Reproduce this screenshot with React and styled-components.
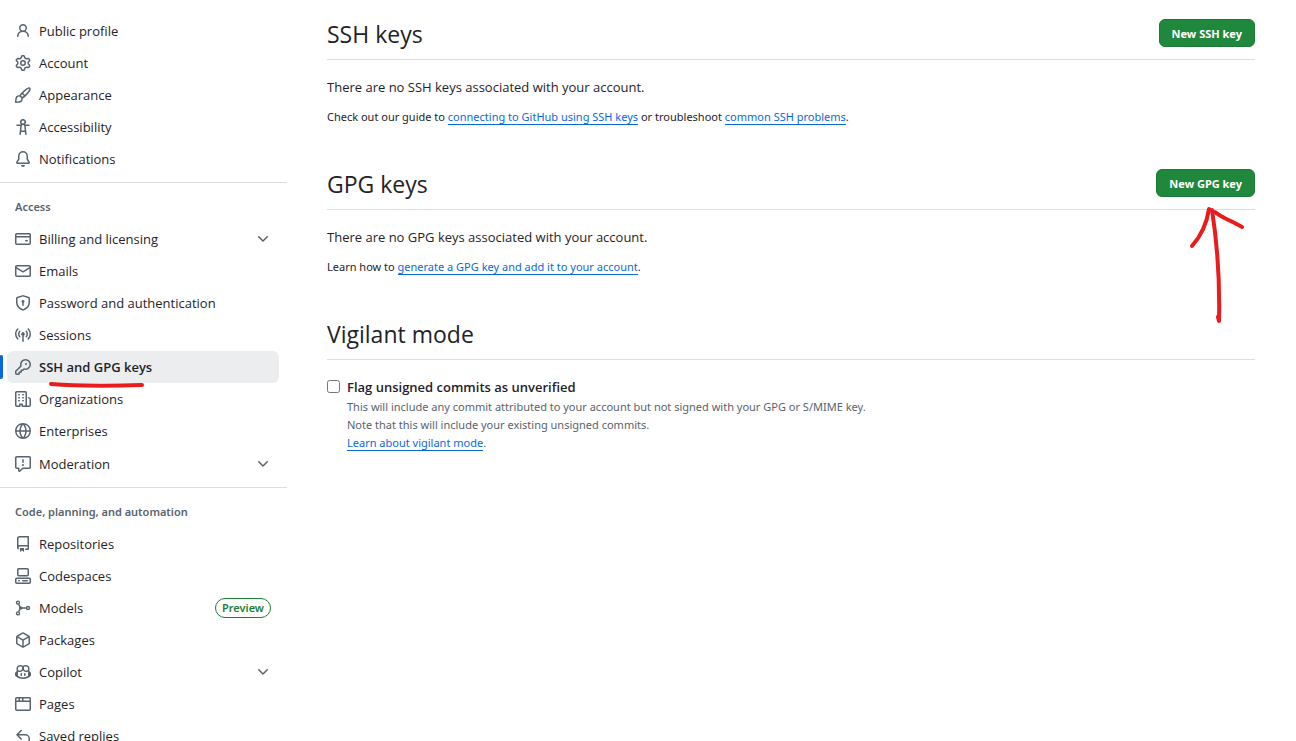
// src/App.jsx
import React from 'react';
import styled, { createGlobalStyle } from 'styled-components';

const smallFont = "'Noto Sans', 'Open Sans', sans-serif";

const GlobalStyle = createGlobalStyle`
  * {
    box-sizing: border-box;
  }

  body {
    margin: 0;
    color: #1f2328;
    background: #fff;
    font-family: 'Open Sans', 'Noto Sans', sans-serif;
    font-size: 13px;
    line-height: 20px;
  }
`;

const Page = styled.div`
  display: flex;
  height: 100vh;
  overflow: hidden;
`;

const Sidebar = styled.nav`
  flex: 0 0 287px;
  padding-top: 15px;
`;

const NavGroup = styled.section`
  & + & {
    margin-top: 7px;
    border-top: 1px solid #d9dee3;
  }
`;

const GroupTitle = styled.h2`
  margin: 0;
  padding: 14px 15px 7px;
  color: #59636e;
  font-family: ${smallFont};
  font-size: 11px;
  font-weight: 600;
  line-height: 19px;
`;

const NavList = styled.ul`
  margin: 0;
  padding: 0 8px 0 7px;
  list-style: none;
`;

const NavItem = styled.li`
  position: relative;
  padding-bottom: ${({ $tall }) => ($tall ? '1px' : '0')};
`;

const NavLink = styled.a`
  display: flex;
  align-items: center;
  gap: 8px;
  min-height: 32px;
  padding: 0 8px;
  border-radius: 6px;
  color: #1f2328;
  background: ${({ $active }) => ($active ? '#ebedef' : 'transparent')};
  font-weight: ${({ $active }) => ($active ? 600 : 400)};
  text-decoration: none;

  &:hover {
    background: #ebedef;
  }
`;

const ActiveBar = styled.span`
  position: absolute;
  top: 4px;
  left: -8px;
  width: 4px;
  height: 24px;
  border-radius: 6px;
  background: #0969da;
`;

const NavLabel = styled.span`
  flex: 1;
`;

const Svg = styled.svg`
  flex: none;
  width: 16px;
  height: 16px;
  fill: #59636e;
`;

const Badge = styled.span`
  padding: 0 6px;
  border: 1px solid #1a7f37;
  border-radius: 20px;
  color: #1a7f37;
  font-family: ${smallFont};
  font-size: 11px;
  font-weight: 600;
  line-height: 18px;
`;

const Main = styled.main`
  flex: 1;
  min-width: 0;
  padding: 19px 41px 0 40px;
`;

const Section = styled.section`
  min-height: 150px;
`;

const SectionHeader = styled.header`
  display: flex;
  align-items: flex-start;
  justify-content: space-between;
  min-height: 41px;
  border-bottom: 1px solid #dadfe4;
`;

const Title = styled.h1`
  margin: 0;
  font-size: 23px;
  font-weight: 400;
  line-height: 30px;
`;

const ButtonWrap = styled.div`
  position: relative;
`;

const GreenButton = styled.button`
  display: block;
  height: 28px;
  padding: 0 12px;
  border: 1px solid #1c7a36;
  border-radius: 6px;
  color: #fff;
  background: #1f883d;
  font-family: ${smallFont};
  font-size: 11px;
  font-weight: 700;
  cursor: pointer;

  &:hover {
    background: #1c8139;
  }
`;

const Text = styled.p`
  margin: 17px 0 0;
`;

const SmallText = styled.p`
  margin: 11px 0 0;
  font-family: ${smallFont};
  font-size: 11px;
  line-height: 18px;
`;

const Link = styled.a`
  border-bottom: 1px solid #0969da;
  color: #0969da;
  text-decoration: none;
`;

const CheckRow = styled.div`
  display: flex;
  gap: 7px;
  margin-top: 17px;
`;

const Checkbox = styled.input`
  flex: none;
  width: 13px;
  height: 13px;
  margin: 3px 0 0;
`;

const CheckLabel = styled.label`
  display: block;
  margin-bottom: 1px;
  font-weight: 600;
`;

const Note = styled.p`
  margin: 0;
  color: #59636e;
  font-family: ${smallFont};
  font-size: 11px;
  line-height: 18px;
`;

// hand drawn marks
const Mark = styled.svg`
  position: absolute;
  z-index: 1;
  fill: none;
  stroke: #e81c1c;
  stroke-width: 4;
  stroke-linecap: round;
  stroke-linejoin: round;
  pointer-events: none;
`;

const UnderlineMark = styled(Mark)`
  top: 28px;
  left: 39px;
  width: 102px;
  height: 10px;
`;

const ArrowMark = styled(Mark)`
  top: 31px;
  right: 5px;
  width: 70px;
  height: 130px;
`;

const icons = {
  person: 'M10.561 8.073a6.005 6.005 0 0 1 3.432 5.142.75.75 0 1 1-1.498.07 4.5 4.5 0 0 0-8.99 0 .75.75 0 0 1-1.498-.07 6.004 6.004 0 0 1 3.431-5.142 3.999 3.999 0 1 1 5.123 0ZM10.5 5a2.5 2.5 0 1 0-5 0 2.5 2.5 0 0 0 5 0Z',
  gear: 'M8 0a8.2 8.2 0 0 1 .701.031C9.444.095 9.99.645 10.16 1.29l.288 1.107c.018.066.079.158.212.224.231.114.454.243.668.386.123.082.233.09.299.071l1.103-.303c.644-.176 1.392.021 1.82.63.27.385.506.792.704 1.218.315.675.111 1.422-.364 1.891l-.814.806c-.049.048-.098.147-.088.294.016.257.016.515 0 .772-.01.147.038.246.088.294l.814.806c.475.469.679 1.216.364 1.891a7.977 7.977 0 0 1-.704 1.217c-.428.61-1.176.807-1.82.63l-1.102-.302c-.067-.019-.177-.011-.3.071a5.909 5.909 0 0 1-.668.386c-.133.066-.194.158-.211.224l-.29 1.106c-.168.646-.715 1.196-1.458 1.26a8.006 8.006 0 0 1-1.402 0c-.743-.064-1.289-.614-1.458-1.26l-.289-1.106c-.018-.066-.079-.158-.212-.224a5.738 5.738 0 0 1-.668-.386c-.123-.082-.233-.09-.299-.071l-1.103.303c-.644.176-1.392-.021-1.82-.63a8.12 8.12 0 0 1-.704-1.218c-.315-.675-.111-1.422.363-1.891l.815-.806c.05-.048.098-.147.088-.294a6.214 6.214 0 0 1 0-.772c.01-.147-.038-.246-.088-.294l-.815-.806C.635 6.045.431 5.298.746 4.623a7.92 7.92 0 0 1 .704-1.217c.428-.61 1.176-.807 1.82-.63l1.102.302c.067.019.177.011.3-.071.214-.143.437-.272.668-.386.133-.066.194-.158.211-.224l.29-1.106C6.009.645 6.556.095 7.299.03 7.53.01 7.764 0 8 0Zm-.571 1.525c-.036.003-.108.036-.137.146l-.289 1.105c-.147.561-.549.967-.998 1.189-.173.086-.34.183-.5.29-.417.278-.97.423-1.529.27l-1.103-.303c-.109-.03-.175.016-.195.045-.22.312-.412.644-.573.99-.014.031-.021.11.059.19l.815.806c.411.406.562.957.53 1.456a4.709 4.709 0 0 0 0 .582c.032.499-.119 1.05-.53 1.456l-.815.806c-.081.08-.073.159-.059.19.162.346.353.677.573.989.02.03.085.076.195.046l1.102-.303c.56-.153 1.113-.008 1.53.27.161.107.328.204.501.29.447.222.85.629.997 1.189l.289 1.105c.029.109.101.143.137.146a6.6 6.6 0 0 0 1.142 0c.036-.003.108-.036.137-.146l.289-1.105c.147-.561.549-.967.998-1.189.173-.086.34-.183.5-.29.417-.278.97-.423 1.529-.27l1.103.303c.109.029.175-.016.195-.045.22-.313.411-.644.573-.99.014-.031.021-.11-.059-.19l-.815-.806c-.411-.406-.562-.957-.53-1.456a4.709 4.709 0 0 0 0-.582c-.032-.499.119-1.05.53-1.456l.815-.806c.081-.08.073-.159.059-.19a6.464 6.464 0 0 0-.573-.989c-.02-.03-.085-.076-.195-.046l-1.102.303c-.56.153-1.113.008-1.53-.27a4.44 4.44 0 0 0-.501-.29c-.447-.222-.85-.629-.997-1.189l-.289-1.105c-.029-.11-.101-.143-.137-.146a6.6 6.6 0 0 0-1.142 0ZM11 8a3 3 0 1 1-6 0 3 3 0 0 1 6 0ZM9.5 8a1.5 1.5 0 1 0-3.001.001A1.5 1.5 0 0 0 9.5 8Z',
  paintbrush: 'M11.134 1.535c.7-.509 1.416-.942 2.076-1.155.649-.21 1.463-.267 2.069.34.603.601.568 1.411.368 2.07-.202.668-.624 1.39-1.125 2.096-1.011 1.424-2.496 2.987-3.775 4.249-1.098 1.084-2.132 1.839-3.04 2.3a3.744 3.744 0 0 1-1.055 3.217c-.431.431-1.065.691-1.657.861-.614.177-1.294.287-1.914.357A21.151 21.151 0 0 1 .797 16H.743l.007-.75H.749L.742 16a.75.75 0 0 1-.743-.742l.743-.008-.742.007v-.054a21.25 21.25 0 0 1 .13-2.284c.067-.647.187-1.287.358-1.914.17-.591.43-1.226.86-1.657a3.746 3.746 0 0 1 3.227-1.054c.466-.893 1.225-1.907 2.314-2.982 1.271-1.255 2.833-2.75 4.246-3.777ZM1.62 13.089c-.051.464-.086.929-.104 1.395.466-.018.932-.053 1.396-.104a10.511 10.511 0 0 0 1.668-.309c.526-.151.856-.325 1.011-.48a2.25 2.25 0 1 0-3.182-3.182c-.155.155-.329.485-.48 1.01a10.515 10.515 0 0 0-.309 1.67Zm10.396-10.34c-1.224.89-2.605 2.189-3.822 3.384l1.718 1.718c1.21-1.205 2.51-2.597 3.387-3.833.47-.662.78-1.227.912-1.662.134-.444.032-.551.009-.575h-.001V1.78c-.014-.014-.113-.113-.548.027-.432.14-.995.462-1.655.942Zm-4.832 7.266-.001.001a9.859 9.859 0 0 0 1.63-1.142L7.155 7.216a9.7 9.7 0 0 0-1.161 1.607c.482.302.889.71 1.19 1.192Z',
  accessibility: 'M9.923 5.302c.063.063.122.129.178.198H14A.75.75 0 0 1 14 7h-3.3l.578 5.163.362 2.997a.75.75 0 0 1-1.49.18L9.868 13H6.132l-.282 2.34a.75.75 0 0 1-1.49-.18l.362-2.997L5.3 7H2a.75.75 0 0 1 0-1.5h3.9a2.54 2.54 0 0 1 .176-.198 3 3 0 1 1 3.847 0ZM9.2 7.073h-.001a1.206 1.206 0 0 0-2.398 0L6.305 11.5h3.39ZM9.5 3a1.5 1.5 0 1 0-3.001.001A1.5 1.5 0 0 0 9.5 3Z',
  bell: 'M8 16a2 2 0 0 0 1.985-1.75c.017-.137-.097-.25-.235-.25h-3.5c-.138 0-.252.113-.235.25A2 2 0 0 0 8 16ZM3 5a5 5 0 0 1 10 0v2.947c0 .05.015.098.042.139l1.703 2.555A1.519 1.519 0 0 1 13.482 13H2.518a1.516 1.516 0 0 1-1.263-2.36l1.703-2.554A.255.255 0 0 0 3 7.947Zm5-3.5A3.5 3.5 0 0 0 4.5 5v2.947c0 .346-.102.683-.294.97l-1.703 2.556a.017.017 0 0 0-.003.01l.001.006c0 .002.002.004.004.006l.006.004.007.001h10.964l.007-.001.006-.004.004-.006.001-.007a.017.017 0 0 0-.003-.01l-1.703-2.554a1.745 1.745 0 0 1-.294-.97V5A3.5 3.5 0 0 0 8 1.5Z',
  card: 'M10.75 9a.75.75 0 0 0 0 1.5h1.5a.75.75 0 0 0 0-1.5h-1.5ZM0 3.75C0 2.784.784 2 1.75 2h12.5c.966 0 1.75.784 1.75 1.75v8.5A1.75 1.75 0 0 1 14.25 14H1.75A1.75 1.75 0 0 1 0 12.25ZM14.5 6.5h-13v5.75c0 .138.112.25.25.25h12.5a.25.25 0 0 0 .25-.25Zm0-2.75a.25.25 0 0 0-.25-.25H1.75a.25.25 0 0 0-.25.25V5h13Z',
  mail: 'M1.75 2h12.5c.966 0 1.75.784 1.75 1.75v8.5A1.75 1.75 0 0 1 14.25 14H1.75A1.75 1.75 0 0 1 0 12.25v-8.5C0 2.784.784 2 1.75 2ZM1.5 12.251c0 .138.112.25.25.25h12.5a.25.25 0 0 0 .25-.25V5.809L8.38 9.397a.75.75 0 0 1-.76 0L1.5 5.809v6.442Zm13-8.181v-.32a.25.25 0 0 0-.25-.25H1.75a.25.25 0 0 0-.25.25v.32L8 7.88Z',
  shield: 'm8.533.133 5.25 1.68A1.75 1.75 0 0 1 15 3.48V7c0 1.566-.32 3.182-1.303 4.682-.983 1.498-2.585 2.813-5.032 3.855a1.697 1.697 0 0 1-1.33 0c-2.447-1.042-4.049-2.357-5.032-3.855C1.32 10.182 1 8.566 1 7V3.48a1.755 1.755 0 0 1 1.217-1.667l5.25-1.68a1.748 1.748 0 0 1 1.066 0Zm-.61 1.429.001.001-5.25 1.68a.251.251 0 0 0-.174.237V7c0 1.36.275 2.666 1.057 3.859.784 1.194 2.121 2.342 4.366 3.298a.196.196 0 0 0 .154 0c2.245-.957 3.582-2.103 4.366-3.297C13.225 9.666 13.5 8.358 13.5 7V3.48a.25.25 0 0 0-.174-.238l-5.25-1.68a.25.25 0 0 0-.153 0ZM9.5 6.5c0 .536-.286 1.032-.75 1.3v2.45a.75.75 0 0 1-1.5 0V7.8A1.5 1.5 0 1 1 9.5 6.5Z',
  broadcast: 'M8.75 8.582v5.668a.75.75 0 0 1-1.5 0V8.582a1.75 1.75 0 1 1 1.5 0Zm3.983-7.125a.75.75 0 0 1 1.06.026A7.976 7.976 0 0 1 16 7c0 2.139-.84 4.083-2.207 5.517a.75.75 0 1 1-1.086-1.034A6.474 6.474 0 0 0 14.5 7a6.474 6.474 0 0 0-1.793-4.483.75.75 0 0 1 .026-1.06Zm-9.466 0c.3.286.312.76.026 1.06A6.474 6.474 0 0 0 1.5 7a6.47 6.47 0 0 0 1.793 4.483.75.75 0 0 1-1.086 1.034A7.973 7.973 0 0 1 0 7c0-2.139.84-4.083 2.207-5.517a.75.75 0 0 1 1.06-.026Zm8.556 2.321A4.988 4.988 0 0 1 13 7a4.988 4.988 0 0 1-1.177 3.222.75.75 0 1 1-1.146-.967A3.487 3.487 0 0 0 11.5 7c0-.86-.309-1.645-.823-2.255a.75.75 0 0 1 1.146-.967Zm-6.492.958A3.48 3.48 0 0 0 4.5 7a3.48 3.48 0 0 0 .823 2.255.75.75 0 0 1-1.146.967A4.981 4.981 0 0 1 3 7a4.982 4.982 0 0 1 1.188-3.236.75.75 0 1 1 1.143.972Z',
  key: 'M10.5 0a5.499 5.499 0 1 1-1.288 10.848l-.932.932a.749.749 0 0 1-.53.22H7v.75a.749.749 0 0 1-.22.53l-.5.5a.749.749 0 0 1-.53.22H5v.75a.749.749 0 0 1-.22.53l-.5.5a.749.749 0 0 1-.53.22h-2A1.75 1.75 0 0 1 0 14.25v-2c0-.199.079-.389.22-.53l4.932-4.932A5.5 5.5 0 0 1 10.5 0Zm-4 5.5c-.001.431.069.86.205 1.269a.75.75 0 0 1-.181.768L1.5 12.56v1.69c0 .138.112.25.25.25h1.69l.06-.06v-1.19a.75.75 0 0 1 .75-.75h1.19l.06-.06v-1.19a.75.75 0 0 1 .75-.75h1.19l1.023-1.025a.75.75 0 0 1 .768-.18A4 4 0 1 0 6.5 5.5ZM11 6a1 1 0 1 1 0-2 1 1 0 0 1 0 2Z',
  organization: 'M1.75 16A1.75 1.75 0 0 1 0 14.25V1.75C0 .784.784 0 1.75 0h8.5C11.216 0 12 .784 12 1.75v12.5c0 .085-.006.168-.018.25h2.268a.25.25 0 0 0 .25-.25V8.285a.25.25 0 0 0-.111-.208l-1.055-.703a.749.749 0 1 1 .832-1.248l1.055.703c.487.325.779.871.779 1.456v5.965A1.75 1.75 0 0 1 14.25 16h-3.5a.766.766 0 0 1-.197-.026c-.099.017-.2.026-.303.026h-3a.75.75 0 0 1-.75-.75V14h-1v1.25a.75.75 0 0 1-.75.75Zm-.25-1.75c0 .138.112.25.25.25H4v-1.25a.75.75 0 0 1 .75-.75h2.5a.75.75 0 0 1 .75.75v1.25h2.25a.25.25 0 0 0 .25-.25V1.75a.25.25 0 0 0-.25-.25h-8.5a.25.25 0 0 0-.25.25ZM3.75 6h.5a.75.75 0 0 1 0 1.5h-.5a.75.75 0 0 1 0-1.5ZM3 3.75A.75.75 0 0 1 3.75 3h.5a.75.75 0 0 1 0 1.5h-.5A.75.75 0 0 1 3 3.75Zm4 3A.75.75 0 0 1 7.75 6h.5a.75.75 0 0 1 0 1.5h-.5A.75.75 0 0 1 7 6.75ZM7.75 3h.5a.75.75 0 0 1 0 1.5h-.5a.75.75 0 0 1 0-1.5ZM3 9.75A.75.75 0 0 1 3.75 9h.5a.75.75 0 0 1 0 1.5h-.5A.75.75 0 0 1 3 9.75ZM7.75 9h.5a.75.75 0 0 1 0 1.5h-.5a.75.75 0 0 1 0-1.5Z',
  globe: 'M8 0a8 8 0 1 1 0 16A8 8 0 0 1 8 0ZM5.78 8.75a9.64 9.64 0 0 0 1.363 4.177c.255.426.542.832.857 1.215.245-.296.551-.705.857-1.215A9.64 9.64 0 0 0 10.22 8.75Zm4.44-1.5a9.64 9.64 0 0 0-1.363-4.177c-.307-.51-.612-.919-.857-1.215a9.927 9.927 0 0 0-.857 1.215A9.64 9.64 0 0 0 5.78 7.25Zm-5.944 1.5H1.543a6.507 6.507 0 0 0 4.666 5.5c-.123-.181-.24-.365-.352-.552-.715-1.192-1.437-2.874-1.581-4.948Zm-2.733-1.5h2.733c.144-2.074.866-3.756 1.58-4.948.12-.197.237-.381.353-.552a6.507 6.507 0 0 0-4.666 5.5Zm10.181 1.5c-.144 2.074-.866 3.756-1.58 4.948-.12.197-.237.381-.353.552a6.507 6.507 0 0 0 4.666-5.5Zm2.733-1.5a6.507 6.507 0 0 0-4.666-5.5c.123.181.24.365.353.552.714 1.192 1.436 2.874 1.58 4.948Z',
  report: 'M0 1.75C0 .784.784 0 1.75 0h12.5C15.216 0 16 .784 16 1.75v9.5A1.75 1.75 0 0 1 14.25 13H8.06l-2.573 2.573A1.458 1.458 0 0 1 3 14.543V13H1.75A1.75 1.75 0 0 1 0 11.25Zm1.75-.25a.25.25 0 0 0-.25.25v9.5c0 .138.112.25.25.25h2a.75.75 0 0 1 .75.75v2.19l2.72-2.72a.749.749 0 0 1 .53-.22h6.5a.25.25 0 0 0 .25-.25v-9.5a.25.25 0 0 0-.25-.25Zm7 2.25v2.5a.75.75 0 0 1-1.5 0v-2.5a.75.75 0 0 1 1.5 0ZM9 9a1 1 0 1 1-2 0 1 1 0 0 1 2 0Z',
  repo: 'M2 2.5A2.5 2.5 0 0 1 4.5 0h8.75a.75.75 0 0 1 .75.75v12.5a.75.75 0 0 1-.75.75h-2.5a.75.75 0 0 1 0-1.5h1.75v-2h-8a1 1 0 0 0-.714 1.7.75.75 0 1 1-1.072 1.05A2.495 2.495 0 0 1 2 11.5Zm10.5-1h-8a1 1 0 0 0-1 1v6.708A2.486 2.486 0 0 1 4.5 9h8ZM5 12.25a.25.25 0 0 1 .25-.25h3.5a.25.25 0 0 1 .25.25v3.25a.25.25 0 0 1-.4.2l-1.45-1.087a.249.249 0 0 0-.3 0L5.4 15.7a.25.25 0 0 1-.4-.2Z',
  codespaces: 'M0 11.25c0-.966.784-1.75 1.75-1.75h12.5c.966 0 1.75.784 1.75 1.75v3A1.75 1.75 0 0 1 14.25 16H1.75A1.75 1.75 0 0 1 0 14.25Zm2-9.5C2 .784 2.784 0 3.75 0h8.5C13.216 0 14 .784 14 1.75v5a1.75 1.75 0 0 1-1.75 1.75h-8.5A1.75 1.75 0 0 1 2 6.75Zm1.75-.25a.25.25 0 0 0-.25.25v5c0 .138.112.25.25.25h8.5a.25.25 0 0 0 .25-.25v-5a.25.25 0 0 0-.25-.25Zm-2 9.5a.25.25 0 0 0-.25.25v3c0 .138.112.25.25.25h12.5a.25.25 0 0 0 .25-.25v-3a.25.25 0 0 0-.25-.25ZM7 12.75a.75.75 0 0 1 .75-.75h4.5a.75.75 0 0 1 0 1.5h-4.5a.75.75 0 0 1-.75-.75Zm-4 0a.75.75 0 0 1 .75-.75h.5a.75.75 0 0 1 0 1.5h-.5a.75.75 0 0 1-.75-.75Z',
  package: 'm8.878.392 5.25 3.045c.54.314.872.89.872 1.514v6.098a1.75 1.75 0 0 1-.872 1.514l-5.25 3.045a1.75 1.75 0 0 1-1.756 0l-5.25-3.045A1.75 1.75 0 0 1 1 11.049V4.951c0-.624.332-1.201.872-1.514L7.122.392a1.75 1.75 0 0 1 1.756 0ZM7.875 1.69l-4.63 2.685L8 7.133l4.755-2.758-4.63-2.685a.248.248 0 0 0-.25 0ZM2.5 5.677v5.372c0 .09.047.171.125.216l4.625 2.683V8.432Zm6.25 8.271 4.625-2.683a.25.25 0 0 0 .125-.216V5.677L8.75 8.432Z',
  copilot: 'M7.998 15.035c-4.562 0-7.873-2.914-7.998-3.749V9.338c.085-.628.677-1.686 1.588-2.065.013-.07.024-.143.036-.218.029-.183.06-.384.126-.612-.201-.508-.254-1.084-.254-1.656 0-.87.128-1.769.693-2.484.579-.733 1.494-1.124 2.724-1.261 1.206-.134 2.262.034 2.944.765.05.053.096.108.139.165.044-.057.094-.112.143-.165.682-.731 1.738-.899 2.944-.765 1.23.137 2.145.528 2.724 1.261.566.715.693 1.614.693 2.484 0 .572-.053 1.148-.254 1.656.066.228.098.429.126.612.012.076.024.148.037.218.924.385 1.522 1.471 1.591 2.095v1.872c0 .766-3.351 3.795-8.002 3.795Zm0-1.485c2.28 0 4.584-1.11 5.002-1.433V7.862l-.023-.116c-.49.21-1.075.291-1.727.291-1.146 0-2.059-.327-2.71-.991A3.222 3.222 0 0 1 8 6.303a3.24 3.24 0 0 1-.544.743c-.65.664-1.563.991-2.71.991-.652 0-1.236-.081-1.727-.291l-.023.116v4.255c.419.323 2.722 1.433 5.002 1.433ZM6.762 2.83c-.193-.206-.637-.413-1.682-.297-1.019.113-1.479.404-1.713.7-.247.312-.369.789-.369 1.554 0 .793.129 1.171.308 1.371.162.181.519.379 1.442.379.853 0 1.339-.235 1.638-.54.315-.322.527-.827.617-1.553.117-.935-.037-1.395-.241-1.614Zm4.155-.297c-1.044-.116-1.488.091-1.681.297-.204.219-.359.679-.242 1.614.091.726.303 1.231.618 1.553.299.305.784.54 1.638.54.922 0 1.28-.198 1.442-.379.179-.2.308-.578.308-1.371 0-.765-.123-1.242-.37-1.554-.233-.296-.693-.587-1.713-.7ZM6.25 9.037a.75.75 0 0 1 .75.75v1.501a.75.75 0 0 1-1.5 0V9.787a.75.75 0 0 1 .75-.75Zm4.25.75v1.501a.75.75 0 0 1-1.5 0V9.787a.75.75 0 0 1 1.5 0Z',
  browser: 'M0 2.75C0 1.784.784 1 1.75 1h12.5c.966 0 1.75.784 1.75 1.75v10.5A1.75 1.75 0 0 1 14.25 15H1.75A1.75 1.75 0 0 1 0 13.25ZM14.5 6h-13v7.25c0 .138.112.25.25.25h12.5a.25.25 0 0 0 .25-.25Zm-6-3.5v2h6V2.75a.25.25 0 0 0-.25-.25ZM5 2.5v2h2v-2Zm-3.25 0a.25.25 0 0 0-.25.25V4.5h2v-2Z',
  reply: 'M6.78 1.97a.75.75 0 0 1 0 1.06L3.81 6h6.44A4.75 4.75 0 0 1 15 10.75v2.5a.75.75 0 0 1-1.5 0v-2.5a3.25 3.25 0 0 0-3.25-3.25H3.81l2.97 2.97a.749.749 0 0 1-.326 1.275.749.749 0 0 1-.734-.215L1.47 7.28a.75.75 0 0 1 0-1.06l4.25-4.25a.75.75 0 0 1 1.06 0Z',
  chevron: 'M12.78 5.22a.749.749 0 0 1 0 1.06l-4.25 4.25a.749.749 0 0 1-1.06 0L3.22 6.28a.749.749 0 1 1 1.06-1.06L8 8.939l3.72-3.719a.749.749 0 0 1 1.06 0Z',
};

const groups = [
  {
    items: [
      { label: 'Public profile', icon: 'person' },
      { label: 'Account', icon: 'gear' },
      { label: 'Appearance', icon: 'paintbrush' },
      { label: 'Accessibility', icon: 'accessibility' },
      { label: 'Notifications', icon: 'bell' },
    ],
  },
  {
    title: 'Access',
    items: [
      { label: 'Billing and licensing', icon: 'card', more: true },
      { label: 'Emails', icon: 'mail' },
      { label: 'Password and authentication', icon: 'shield' },
      { label: 'Sessions', icon: 'broadcast' },
      { label: 'SSH and GPG keys', icon: 'key', active: true },
      { label: 'Organizations', icon: 'organization' },
      { label: 'Enterprises', icon: 'globe', tall: true },
      { label: 'Moderation', icon: 'report', more: true },
    ],
  },
  {
    title: 'Code, planning, and automation',
    items: [
      { label: 'Repositories', icon: 'repo' },
      { label: 'Codespaces', icon: 'codespaces' },
      { label: 'Models', icon: 'models', badge: 'Preview' },
      { label: 'Packages', icon: 'package' },
      { label: 'Copilot', icon: 'copilot', more: true },
      { label: 'Pages', icon: 'browser' },
      { label: 'Saved replies', icon: 'reply' },
    ],
  },
];

function Icon({ name }) {
  if (name === 'models') {
    return (
      <Svg viewBox="0 0 16 16" aria-hidden="true">
        <g fill="none" stroke="#59636e" strokeWidth="1.4">
          <circle cx="3" cy="2.6" r="1.5" />
          <circle cx="3" cy="13.4" r="1.5" />
          <circle cx="13" cy="8" r="1.5" />
          <path d="M3.6 4.1 4.8 6.6V9.400L3.600 11.900M4.800 6.600 7.600 8 4.800 9.400M7.600 8h3.900" />
        </g>
      </Svg>
    );
  }
  return (
    <Svg viewBox="0 0 16 16" aria-hidden="true">
      <path d={icons[name]} />
    </Svg>
  );
}

function KeySection({ title, action, mark, children }) {
  return (
    <Section>
      <SectionHeader>
        <Title>{title}</Title>
        {action && (
          <ButtonWrap>
            <GreenButton type="button">{action}</GreenButton>
            {mark}
          </ButtonWrap>
        )}
      </SectionHeader>
      {children}
    </Section>
  );
}

const arrow = (
  <ArrowMark viewBox="0 0 70 130" aria-hidden="true">
    <path d="M29 9C27 22 21 36 12 46" />
    <path d="M32 10C37 42 40 80 39 121L38 117" />
    <path d="M35 12C42 18 52 21 62 27" />
  </ArrowMark>
);

export default function App() {
  return (
    <>
      <GlobalStyle />
      <Page>
        <Sidebar aria-label="Settings">
          {groups.map((group, groupIndex) => (
            <NavGroup key={groupIndex}>
              {group.title && <GroupTitle>{group.title}</GroupTitle>}
              <NavList>
                {group.items.map((item) => (
                  <NavItem key={item.label} $tall={item.tall}>
                    {item.active && <ActiveBar />}
                    <NavLink href="#" $active={item.active}>
                      <Icon name={item.icon} />
                      <NavLabel>{item.label}</NavLabel>
                      {item.badge && <Badge>{item.badge}</Badge>}
                      {item.more && <Icon name="chevron" />}
                    </NavLink>
                    {item.active && (
                      <UnderlineMark viewBox="0 0 102 10" aria-hidden="true">
                        <path d="M5 5C30 7 62 7 96 6" />
                      </UnderlineMark>
                    )}
                  </NavItem>
                ))}
              </NavList>
            </NavGroup>
          ))}
        </Sidebar>

        <Main>
          <KeySection title="SSH keys" action="New SSH key">
            <Text>There are no SSH keys associated with your account.</Text>
            <SmallText>
              Check out our guide to <Link href="#">connecting to GitHub using SSH keys</Link> or troubleshoot{' '}
              <Link href="#">common SSH problems</Link>.
            </SmallText>
          </KeySection>

          <KeySection title="GPG keys" action="New GPG key" mark={arrow}>
            <Text>There are no GPG keys associated with your account.</Text>
            <SmallText>
              Learn how to <Link href="#">generate a GPG key and add it to your account</Link>.
            </SmallText>
          </KeySection>

          <KeySection title="Vigilant mode">
            <CheckRow>
              <Checkbox type="checkbox" id="vigilant" />
              <div>
                <CheckLabel htmlFor="vigilant">Flag unsigned commits as unverified</CheckLabel>
                <Note>This will include any commit attributed to your account but not signed with your GPG or S/MIME key.</Note>
                <Note>Note that this will include your existing unsigned commits.</Note>
                <Note>
                  <Link href="#">Learn about vigilant mode</Link>.
                </Note>
              </div>
            </CheckRow>
          </KeySection>
        </Main>
      </Page>
    </>
  );
}
